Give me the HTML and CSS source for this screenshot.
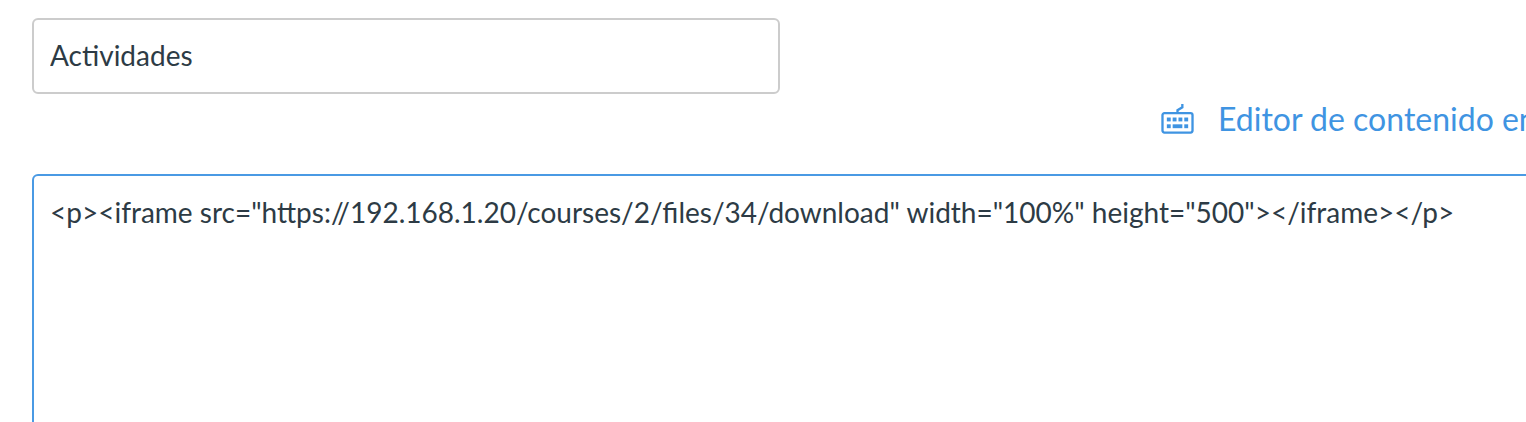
FILE: index.html
```html
<!DOCTYPE html>
<html lang="en">
<head>
  <meta charset="UTF-8">
  <title>Actividades</title>
  <link rel="stylesheet" href="styles.css">
</head>
<body>
  <div class="container">
    <input class="title-input" type="text" value="Actividades">

    <div class="editor-toggle">
      <svg class="keyboard-icon" viewBox="0 0 34 32" width="33" height="31" aria-hidden="true">
        <path class="icon-line" d="M1.5 12.5a2 2 0 0 1 2-2h27a2 2 0 0 1 2 2v16a2 2 0 0 1-2 2h-27a2 2 0 0 1-2-2z"/>
        <path class="icon-line" d="M17 10V7.5l5-3V1"/>
        <g class="icon-keys">
          <rect x="6" y="15" width="4" height="4"/>
          <rect x="12" y="15" width="4" height="4"/>
          <rect x="18" y="15" width="4" height="4"/>
          <rect x="24" y="15" width="4" height="4"/>
          <rect x="6" y="22" width="4" height="4"/>
          <rect x="12" y="22" width="10" height="4"/>
          <rect x="24" y="22" width="4" height="4"/>
        </g>
      </svg>
      <a class="editor-link" href="#">Editor de contenido enriquecido</a>
    </div>

    <div class="html-box">&lt;p&gt;&lt;iframe src="https://192.168.1.20/courses/2/files/34/download" width="100%" height="500"&gt;&lt;/iframe&gt;&lt;/p&gt;</div>
  </div>
</body>
</html>
```

FILE: styles.css
```css
html, body {
  height: 100%;
}

body {
  margin: 0;
  background: #fff;
  color: #2d3b45;
  font-family: Lato, 'Liberation Sans', sans-serif;
  overflow: hidden;
}

.container {
  padding: 18px 0 0 32px;
}

.title-input {
  display: block;
  box-sizing: border-box;
  width: 748px;
  height: 76px;
  padding: 0 16px 2px;
  border: 2px solid #ccc;
  border-radius: 6px;
  color: #2d3b45;
  font-family: inherit;
  font-size: 28px;
}

.editor-toggle {
  display: flex;
  align-items: center;
  gap: 24px;
  width: 1600px;
  height: 50px;
  margin: 0 0 30px 1129px;
  white-space: nowrap;
}

.keyboard-icon {
  flex: none;
  margin-top: -2px;
}

.icon-line {
  fill: none;
  stroke: #3f94e2;
  stroke-width: 2.4;
}

.icon-keys {
  fill: #3f94e2;
}

.editor-link {
  padding-bottom: 2px;
  color: #3f94e2;
  font-size: 32px;
  text-decoration: none;
}

.html-box {
  box-sizing: border-box;
  width: 1600px;
  height: 400px;
  padding: 20px 16px;
  border: 2px solid #4a9ae4;
  border-radius: 6px;
  font-size: 28px;
  line-height: 32px;
  white-space: nowrap;
}
```
